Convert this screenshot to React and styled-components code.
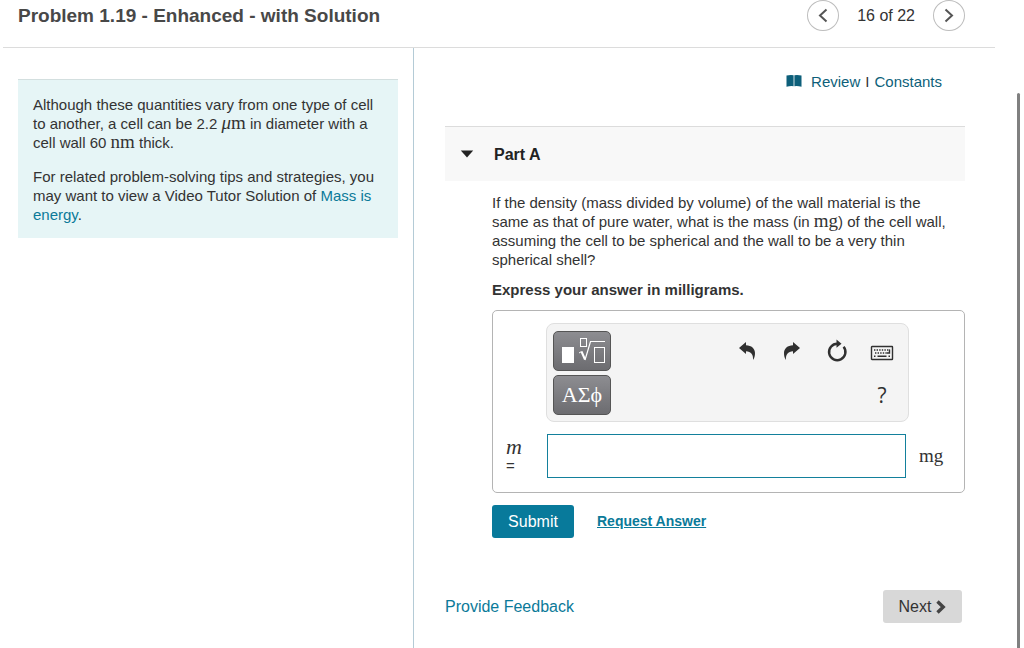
import styled, { createGlobalStyle } from 'styled-components';

const GlobalStyle = createGlobalStyle`
  * { box-sizing: border-box; }
  body {
    margin: 0;
    background: #fff;
    color: #333;
    font: 15px/19px "Liberation Sans", Arial, sans-serif;
  }
  button, input { font: inherit; }
  h1, h2, p { margin: 0; }
`;

const Page = styled.div`
  display: flex;
  min-height: 100vh;
`;

const Main = styled.main`
  flex: 1;
  min-width: 0;
  display: flex;
  flex-direction: column;
`;

const ScrollTrack = styled.div`
  flex: none;
  display: flex;
  justify-content: flex-end;
  width: 29px;
  padding: 93px 4px 0 0;
`;

const ScrollThumb = styled.div`
  width: 3px;
  border-radius: 2px 2px 0 0;
  background: #808080;
`;

const Header = styled.header`
  display: flex;
  justify-content: space-between;
  height: 48px;
  margin-left: 3px;
  padding: 0 30px 0 15px;
  border-bottom: 1px solid #dcdcdc;
`;

const Title = styled.h1`
  padding-top: 5px;
  color: #484848;
  font-size: 19px;
  line-height: 22px;
`;

const Pager = styled.nav`
  display: flex;
  align-items: center;
  gap: 18px;
  height: 31px;
  font-size: 16px;
`;

const RoundButton = styled.button`
  display: grid;
  place-items: center;
  width: 32px;
  height: 31px;
  padding: 0;
  border: 1px solid #bdbdbd;
  border-radius: 50%;
  background: #fff;
  color: #555;
`;

const Columns = styled.div`
  flex: 1;
  display: flex;
`;

const Intro = styled.aside`
  flex: 0 0 414px;
  padding: 31px 15px 0 18px;
  border-right: 1px solid #b4cbd6;
`;

const IntroBox = styled.div`
  display: flex;
  flex-direction: column;
  gap: 15px;
  padding: 15px 15px 14px;
  border-top: 1px solid #d3dfdf;
  background: #e6f5f6;
`;

const Link = styled.a`
  color: ${(p) => p.$color || '#0b7a99'};
  font-size: ${(p) => p.$size || 15}px;
  font-weight: ${(p) => (p.$bold ? 700 : 400)};
  text-decoration: ${(p) => (p.$bold ? 'underline' : 'none')};
`;

const MathText = styled.span`
  font-family: "Liberation Serif", "Times New Roman", serif;
  font-size: ${(p) => p.$size || 19}px;
  font-style: ${(p) => (p.$italic ? 'italic' : 'normal')};
  line-height: 16px;
`;

const Work = styled.section`
  flex: 1;
  min-width: 0;
  padding: 23px 30px 24px 31px;
`;

const Tools = styled.div`
  display: flex;
  justify-content: flex-end;
  align-items: center;
  gap: 5px;
  height: 20px;
  margin-bottom: 35px;
  padding-right: 23px;

  svg { margin-right: 4px; }
`;

const PartHeader = styled.div`
  display: flex;
  align-items: center;
  height: 55px;
  border-top: 1px solid #dcdcdc;
  background: #f8f8f8;
`;

const Toggle = styled.button`
  display: flex;
  align-items: center;
  gap: 20px;
  padding: 0 15px;
  border: 0;
  background: none;
  color: #222;
`;

const PartTitle = styled.h2`
  font-size: 16px;
`;

const PartBody = styled.form`
  padding: 12px 0 0 47px;
`;

const Question = styled.p`
  padding-right: 8px;
`;

const Instruction = styled.p`
  margin: 11px 0;
  font-weight: 700;
`;

const AnswerBox = styled.div`
  display: grid;
  grid-template-columns: 40px 1fr 42px;
  row-gap: 12px;
  padding: 12px 13px 14px;
  border: 1px solid #b4b4b4;
  border-radius: 5px;
`;

const Toolbar = styled.div`
  grid-column: 2;
  display: flex;
  justify-content: space-between;
  padding: 7px 6px 6px;
  border: 1px solid #dfdfdf;
  border-radius: 8px;
  background: #f4f4f4;
`;

const KeyGroup = styled.div`
  display: grid;
  gap: 4px;
`;

const KeyButton = styled.button`
  display: grid;
  place-items: center;
  width: 58px;
  height: 40px;
  padding: 0;
  border: 1px solid #555;
  border-radius: 5px;
  background: linear-gradient(#8d8d91, #6c6c70);
  color: #fff;
`;

const ActionGroup = styled.div`
  display: grid;
  grid-template-columns: repeat(4, 24px);
  column-gap: 21px;
  align-content: start;
  row-gap: 20px;
  padding: 8px 8px 0 0;
`;

const ActionButton = styled.button`
  display: grid;
  place-items: center;
  width: 24px;
  height: 24px;
  padding: 0;
  border: 0;
  background: none;
  color: #303030;

  &:last-child {
    grid-column: 4;
    font: 21px/24px "Open Sans", sans-serif;
  }
`;

const AnswerLabel = styled.label`
  grid-column: 1;
  display: flex;
  flex-direction: column;
  justify-content: center;

  span { line-height: 19px; }
`;

const AnswerInput = styled.input`
  height: 44px;
  min-width: 0;
  margin: 0 3px 0 1px;
  padding: 0 10px;
  border: 1px solid #13809c;
  border-radius: 0;
  background: #fff;
  outline: 0;
`;

const Unit = styled.span`
  align-self: center;
  padding-left: 10px;
`;

const Actions = styled.div`
  display: flex;
  align-items: center;
  gap: 23px;
  margin-top: 12px;
`;

const SubmitButton = styled.button`
  width: 82px;
  height: 33px;
  padding: 0;
  border: 0;
  border-radius: 3px;
  background: #087a9b;
  color: #fff;
  font-size: 16px;
`;

const Footer = styled.footer`
  display: flex;
  align-items: center;
  justify-content: space-between;
  margin-top: 52px;
  padding-right: 3px;
`;

const NextButton = styled.button`
  display: flex;
  align-items: center;
  justify-content: center;
  gap: 5px;
  width: 79px;
  height: 33px;
  padding: 0;
  border: 0;
  border-radius: 3px;
  background: #d8d8d8;
  color: #333;
  font-size: 16px;
`;

function Chevron({ right }) {
  return (
    <svg width="10" height="16" viewBox="0 0 10 16" fill="none" stroke="currentColor" strokeWidth="2">
      <path d={right ? 'M1.5 1.5 L8 7.5 L1.5 13.5' : 'M8.5 1.5 L2 7.5 L8.5 13.5'} />
    </svg>
  );
}

function BookIcon() {
  return (
    <svg width="16" height="14" viewBox="0 0 16 14" fill="#0d5f7a">
      <path d="M.5 1.6 Q4 .6 7.6 1.2 V12.2 Q4 11.8 .5 12.8Z" />
      <path d="M8.4 1.2 Q12 .6 15.5 1.6 V12.8 Q12 11.8 8.4 12.2Z" />
    </svg>
  );
}

function TemplateIcon() {
  return (
    <svg width="46" height="30" viewBox="0 0 46 30" fill="none" stroke="#fff">
      <rect x="3" y="11" width="12" height="16" fill="#fff" stroke="none" />
      <rect x="21.5" y="2.5" width="6" height="8" />
      <path d="M20 17 L22.5 15.5" />
      <path d="M22.5 15.5 L26 23.5" strokeWidth="2" />
      <path d="M26 24 L31.5 5.5 H46" strokeWidth="1.2" />
      <rect x="35.5" y="11.5" width="10" height="15" />
    </svg>
  );
}

function UndoIcon({ flip }) {
  return (
    <svg width="18" height="20" viewBox="0 0 18 20" fill="currentColor">
      <path
        transform={flip ? 'translate(18 0) scale(-1 1)' : undefined}
        d="M1 7 L8 1 V4.2 C13.5 4.4 17 7.5 17 12 C17 14.8 16.5 17 15 19 C15.6 14 13 10.3 8 10.2 V13Z"
      />
    </svg>
  );
}

function ResetIcon() {
  return (
    <svg width="22" height="24" viewBox="0 0 22 24" fill="none" stroke="currentColor" strokeWidth="2.4">
      <path d="M11.5 4.8 A8.2 8.2 0 1 0 17.6 7.8" />
      <path d="M10.5 .5 L15.5 4.8 L10.5 8.8Z" fill="currentColor" stroke="none" />
    </svg>
  );
}

function KeyboardIcon() {
  return (
    <svg width="24" height="20" viewBox="0 -4 24 20" fill="none" stroke="currentColor">
      <rect x="1.5" y="1.5" width="21" height="13" rx=".5" strokeWidth="1.4" />
      <path d="M4 5 H20 M5 8 H17" strokeWidth="1.6" strokeDasharray="1.4 1.2" />
      <path d="M19.5 4.5 V8 H17" strokeWidth="1.4" />
      <path d="M4 11.2 H5.5 M7.5 11.2 H16.5 M18.5 11.2 H20" strokeWidth="1.6" />
    </svg>
  );
}

export default function App() {
  return (
    <>
      <GlobalStyle />
      <Page>
        <Main>
          <Header>
            <Title>Problem 1.19 - Enhanced - with Solution</Title>
            <Pager>
              <RoundButton aria-label="Previous"><Chevron /></RoundButton>
              <span>16 of 22</span>
              <RoundButton aria-label="Next item"><Chevron right /></RoundButton>
            </Pager>
          </Header>

          <Columns>
            <Intro>
              <IntroBox>
                <p>
                  Although these quantities vary from one type of cell to another, a cell can be
                  2.2 <MathText $italic>μ</MathText><MathText>m</MathText> in diameter with a
                  cell wall 60 <MathText>nm</MathText> thick.
                </p>
                <p>
                  For related problem-solving tips and strategies, you may want to view a Video
                  Tutor Solution of <Link href="#video">Mass is energy</Link>.
                </p>
              </IntroBox>
            </Intro>

            <Work>
              <Tools>
                <BookIcon />
                <Link href="#review" $color="#0d5f7a">Review</Link>
                <span>I</span>
                <Link href="#constants" $color="#0d5f7a">Constants</Link>
              </Tools>

              <PartHeader>
                <Toggle aria-expanded="true">
                  <svg width="14" height="8" viewBox="0 0 14 8" fill="currentColor">
                    <path d="M.8 .5 H13.2 L7 7.5Z" />
                  </svg>
                  <PartTitle>Part A</PartTitle>
                </Toggle>
              </PartHeader>

              <PartBody onSubmit={(e) => e.preventDefault()}>
                <Question>
                  If the density (mass divided by volume) of the wall material is the same as that
                  of pure water, what is the mass (in <MathText>mg</MathText>) of the cell wall,
                  assuming the cell to be spherical and the wall to be a very thin spherical shell?
                </Question>
                <Instruction>Express your answer in milligrams.</Instruction>

                <AnswerBox>
                  <Toolbar>
                    <KeyGroup>
                      <KeyButton type="button" aria-label="Templates"><TemplateIcon /></KeyButton>
                      <KeyButton type="button"><MathText $size={22}>ΑΣϕ</MathText></KeyButton>
                    </KeyGroup>
                    <ActionGroup>
                      <ActionButton type="button" aria-label="Undo"><UndoIcon /></ActionButton>
                      <ActionButton type="button" aria-label="Redo"><UndoIcon flip /></ActionButton>
                      <ActionButton type="button" aria-label="Reset"><ResetIcon /></ActionButton>
                      <ActionButton type="button" aria-label="Keyboard"><KeyboardIcon /></ActionButton>
                      <ActionButton type="button">?</ActionButton>
                    </ActionGroup>
                  </Toolbar>
                  <AnswerLabel htmlFor="answer">
                    <MathText $italic $size={22}>m</MathText>
                    <span>=</span>
                  </AnswerLabel>
                  <AnswerInput id="answer" type="text" />
                  <Unit><MathText>mg</MathText></Unit>
                </AnswerBox>

                <Actions>
                  <SubmitButton type="submit">Submit</SubmitButton>
                  <Link href="#answer" $bold $size={14}>Request Answer</Link>
                </Actions>
              </PartBody>

              <Footer>
                <Link href="#feedback" $size={16}>Provide Feedback</Link>
                <NextButton>
                  Next
                  <svg width="10" height="14" viewBox="0 0 10 14" fill="none" stroke="#444" strokeWidth="3.4">
                    <path d="M1.5 1.5 L7.2 7 L1.5 12.5" />
                  </svg>
                </NextButton>
              </Footer>
            </Work>
          </Columns>
        </Main>
        <ScrollTrack><ScrollThumb /></ScrollTrack>
      </Page>
    </>
  );
}
